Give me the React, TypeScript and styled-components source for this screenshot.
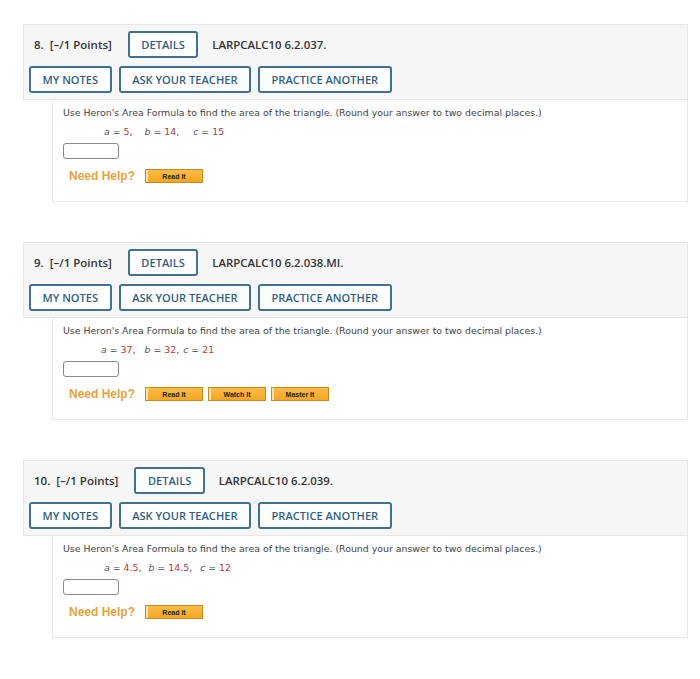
import styled, { createGlobalStyle } from "styled-components";

const GlobalStyle = createGlobalStyle`
  body {
    margin: 0;
    background: #ffffff;
    font-family: "Open Sans", "Liberation Sans", sans-serif;
  }
`;

type Variable = { name: string; value: string; gap: number };

type Question = {
  number: number;
  code: string;
  vars: Variable[];
  indent: number;
  help: string[];
};

// gap = space after the term, to match the uneven spacing of the source
const questions: Question[] = [
  {
    number: 8,
    code: "LARPCALC10 6.2.037.",
    vars: [
      { name: "a", value: "5", gap: 12 },
      { name: "b", value: "14", gap: 14 },
      { name: "c", value: "15", gap: 0 },
    ],
    indent: 41,
    help: ["Read It"],
  },
  {
    number: 9,
    code: "LARPCALC10 6.2.038.MI.",
    vars: [
      { name: "a", value: "37", gap: 9 },
      { name: "b", value: "32", gap: 4 },
      { name: "c", value: "21", gap: 0 },
    ],
    indent: 38,
    help: ["Read It", "Watch It", "Master It"],
  },
  {
    number: 10,
    code: "LARPCALC10 6.2.039.",
    vars: [
      { name: "a", value: "4.5", gap: 7 },
      { name: "b", value: "14.5", gap: 8 },
      { name: "c", value: "12", gap: 0 },
    ],
    indent: 41,
    help: ["Read It"],
  },
];

const Page = styled.div`
  padding: 24px 0 0 23px;
  width: 665px;
`;

const Card = styled.section`
  margin-bottom: 40px;
`;

const Header = styled.div`
  background: #f6f6f6;
  border: 1px solid #e6e6e6;
  padding: 6px 6px 6px 5px;
  display: flex;
  flex-direction: column;
  gap: 8px;
`;

const TitleRow = styled.div`
  display: flex;
  align-items: center;
`;

const Points = styled.span`
  font-weight: 600;
  font-size: 11.5px;
  color: #333333;
  margin: 0 16px 0 5px;
  white-space: pre;
`;

const Code = styled.span`
  font-weight: 600;
  font-size: 11.4px;
  color: #333333;
  margin-left: 14px;
`;

const ActionRow = styled.div`
  display: flex;
  gap: 7px;
`;

const OutlineButton = styled.button`
  font-family: "Open Sans", "Liberation Sans", sans-serif;
  font-weight: 600;
  font-size: 11.1px;
  color: #2f5f7f;
  background: #ffffff;
  border: 2px solid #3d7291;
  border-radius: 3px;
  height: 27px;
  padding: 0 11.5px;
  line-height: 1;
  cursor: pointer;
`;

const Body = styled.div`
  margin-left: 29px;
  border: 1px solid #e9e9e9;
  border-top: none;
  padding: 6px 0 18px 10px;
  font-family: "DejaVu Sans", Verdana, sans-serif;
  color: #444444;
`;

const Prompt = styled.p`
  margin: 0;
  font-size: 9.4px;
  line-height: 14px;
`;

const MathLine = styled.div<{ $indent: number }>`
  display: flex;
  margin: 5px 0 0 ${(p) => p.$indent}px;
  font-size: 9.4px;
  line-height: 14px;
`;

const Term = styled.span<{ $gap: number }>`
  white-space: pre;
  margin-right: ${(p) => p.$gap}px;
`;

const Var = styled.i`
  font-style: italic;
  color: #555555;
`;

const Num = styled.span`
  color: #b03a3a;
`;

const AnswerBox = styled.div`
  width: 54px;
  height: 14px;
  margin-top: 4px;
  border: 1px solid #8a8a8a;
  border-radius: 3px;
  background: #ffffff;
`;

const HelpRow = styled.div`
  display: flex;
  align-items: center;
  gap: 5px;
  height: 14px;
  margin: 10px 0 0 6px;
`;

const NeedHelp = styled.span`
  font-family: "Liberation Sans", Arial, sans-serif;
  font-weight: bold;
  font-size: 12px;
  color: #e7a23c;
  margin-right: 5px;
`;

const HelpButton = styled.button`
  width: 58px;
  height: 14px;
  padding: 0;
  font-family: "Liberation Sans", Arial, sans-serif;
  font-weight: bold;
  font-size: 7px;
  color: #222222;
  background: linear-gradient(#fbbd45, #f4a623);
  border: 1px solid #c68a22;
  box-shadow: inset 2px 0 0 #fde3a6;
  cursor: pointer;
`;

export default function App() {
  return (
    <>
      <GlobalStyle />
      <Page>
        {questions.map((q) => (
          <Card key={q.number}>
            <Header>
              <TitleRow>
                <Points>{`${q.number}.  [–/1 Points]`}</Points>
                <OutlineButton>DETAILS</OutlineButton>
                <Code>{q.code}</Code>
              </TitleRow>
              <ActionRow>
                <OutlineButton>MY NOTES</OutlineButton>
                <OutlineButton>ASK YOUR TEACHER</OutlineButton>
                <OutlineButton>PRACTICE ANOTHER</OutlineButton>
              </ActionRow>
            </Header>
            <Body>
              <Prompt>
                Use Heron's Area Formula to find the area of the triangle. (Round
                your answer to two decimal places.)
              </Prompt>
              <MathLine $indent={q.indent}>
                {q.vars.map((v, i) => (
                  <Term key={v.name} $gap={v.gap}>
                    <Var>{v.name}</Var> = <Num>{v.value}</Num>
                    {i < q.vars.length - 1 ? "," : ""}
                  </Term>
                ))}
              </MathLine>
              <AnswerBox />
              <HelpRow>
                <NeedHelp>Need Help?</NeedHelp>
                {q.help.map((h) => (
                  <HelpButton key={h}>{h}</HelpButton>
                ))}
              </HelpRow>
            </Body>
          </Card>
        ))}
      </Page>
    </>
  );
}
